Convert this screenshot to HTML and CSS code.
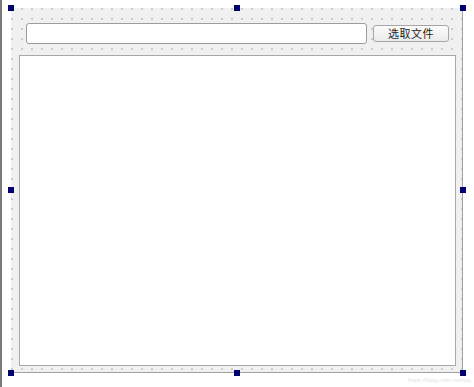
FILE: index.html
```html
<!DOCTYPE html>
<html lang="zh">
<head>
<meta charset="utf-8">
<title>Form</title>
<link rel="stylesheet" href="styles.css">
</head>
<body>
<div class="stage">
  <div class="form">
    <div class="row">
      <div class="line-edit"></div>
      <button class="btn">选取文件</button>
    </div>
    <div class="text-edit"></div>
    <span class="handle h-tl"></span>
    <span class="handle h-tc"></span>
    <span class="handle h-tr"></span>
    <span class="handle h-ml"></span>
    <span class="handle h-mr"></span>
    <span class="handle h-bl"></span>
    <span class="handle h-bc"></span>
    <span class="handle h-br"></span>
  </div>
  <span class="watermark">https://blog.csdn.net/qq</span>
</div>
</body>
</html>
```
FILE: styles.css
```css
html, body {
  margin: 0;
  padding: 0;
  background: #ffffff;
  width: 474px;
  height: 387px;
  overflow: hidden;
}

.stage {
  position: relative;
  box-sizing: border-box;
  width: 474px;
  height: 387px;
  border-left: 2px solid #7a7a7a;
  padding: 8px 0 0 9px;
}

.form {
  position: relative;
  box-sizing: border-box;
  width: 452px;
  height: 365px;
  background-color: #f0f0f0;
  background-image: radial-gradient(circle, #b8b8b8 0.6px, rgba(0,0,0,0) 0.9px);
  background-size: 10px 10px;
  background-position: -4px -4px;
  border-right: 1px solid #a0a0a0;
  border-bottom: 1px solid #a0a0a0;
  padding: 15px 6px 6px 8px;
  display: flex;
  flex-direction: column;
  gap: 11px;
}

.row {
  display: flex;
  align-items: center;
  height: 21px;
  padding-left: 7px;
  gap: 6px;
}

.line-edit {
  box-sizing: border-box;
  width: 341px;
  height: 21px;
  background: #ffffff;
  border: 1px solid #9c9c9c;
  border-radius: 3px;
}

.btn {
  box-sizing: border-box;
  width: 76px;
  height: 17px;
  margin: 0;
  padding: 0;
  border: 1px solid #a6a6a6;
  border-radius: 3px;
  background: linear-gradient(#fbfbfb, #ebebeb);
  font-family: "Noto Sans CJK SC", sans-serif;
  font-size: 11px;
  line-height: 15px;
  color: #222222;
  letter-spacing: 0.5px;
}

.text-edit {
  box-sizing: border-box;
  width: 437px;
  height: 311px;
  background: #ffffff;
  border: 1px solid #a8a8a8;
}

.handle {
  position: absolute;
  width: 6px;
  height: 6px;
  background: #000070;
  border: 0;
}

.h-tl { left: -3px; top: -3px; }
.h-tc { left: 223px; top: -3px; }
.h-tr { right: -4px; top: -3px; }
.h-ml { left: -3px; top: 179px; }
.h-mr { right: -4px; top: 179px; }
.h-bl { left: -3px; bottom: -4px; }
.h-bc { left: 223px; bottom: -4px; }
.h-br { right: -4px; bottom: -4px; }

.watermark {
  position: absolute;
  left: 406px;
  top: 376px;
  font-family: "Liberation Sans", sans-serif;
  font-size: 6px;
  line-height: 8px;
  color: #e4e4ec;
  white-space: nowrap;
}
```
